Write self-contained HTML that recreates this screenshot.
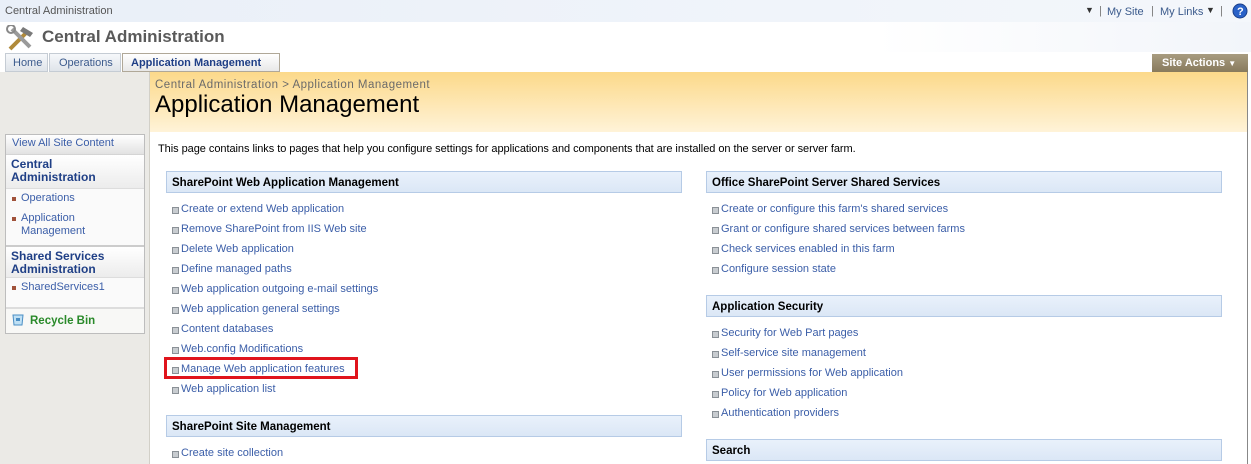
<!DOCTYPE html>
<html><head><meta charset="utf-8"><style>
*{margin:0;padding:0;box-sizing:border-box}
body{width:1251px;height:464px;overflow:hidden;font-family:"Liberation Sans",sans-serif;font-size:11px;background:#fff;position:relative}
.a{position:absolute;white-space:nowrap}
.top{left:0;top:0;width:1251px;height:22px;background:linear-gradient(90deg,#e9eff8,#f4f7fb);}
.lnk{color:#3b5a8c}
.hdr{position:absolute;height:22px;background:linear-gradient(#e9f1fb,#dbe7f6);border:1px solid #b6cbe6;font-weight:bold;font-size:11.5px;color:#000;padding:5px 0 0 5px}
.it{position:absolute;color:#3b5ea8;font-size:11px}
.it:before{content:"";position:absolute;left:-9px;top:4px;width:5px;height:5px;background:#c8ccd0;border:1px solid #8a9096}
.nav{position:absolute;left:5px;width:140px;}
.nh{color:#1f3f86;font-weight:bold;font-size:12px;line-height:13px;padding:3px 5px;background:linear-gradient(#fff,#ececec);border-top:1px solid #d4d4d4}
.ni{color:#3b5ea8;padding-left:15px;position:relative;font-size:11px}
.ni:before{content:"";position:absolute;left:6px;top:5px;width:4px;height:4px;background:#a0523a}
</style></head><body>
<div class="a top"></div>
<div class="a" style="left:5px;top:5px;color:#555">Central Administration</div>
<div class="a" style="left:1085px;top:5px;color:#333;font-size:9px">▼</div>
<div class="a" style="left:1099px;top:5px;color:#777">|</div>
<div class="a lnk" style="left:1107px;top:6px">My Site</div>
<div class="a" style="left:1151px;top:5px;color:#777">|</div>
<div class="a lnk" style="left:1160px;top:6px">My Links</div>
<div class="a" style="left:1206px;top:5px;color:#333;font-size:9px">▼</div>
<div class="a" style="left:1220px;top:5px;color:#777">|</div>
<svg class="a" style="left:1232px;top:3px" width="16" height="16"><circle cx="8" cy="8" r="7" fill="#2a62c8" stroke="#1a3f8a"/><text x="5" y="12" font-size="11" font-weight="bold" fill="#fff" font-family="Liberation Sans">?</text></svg>
<div class="a" style="left:0;top:22px;width:1251px;height:30px;background:linear-gradient(90deg,#fff 70%,#f2f5fa)"></div>
<svg class="a" style="left:6px;top:25px" width="30" height="26"><path d="M4 24 L22 6" stroke="#b08a3a" stroke-width="4"/><path d="M17 2 L27 8 L24 12 L14 6Z" fill="#7a7a7a"/><path d="M6 4 L24 22" stroke="#9a9a9a" stroke-width="4"/><circle cx="5" cy="4" r="4" fill="none" stroke="#888" stroke-width="2"/></svg>
<div class="a" style="left:42px;top:27px;font-size:17px;font-weight:bold;color:#5a5a5a">Central Administration</div>
<div class="a" style="left:5px;top:53px;width:43px;height:19px;background:linear-gradient(#f6f8fb,#dfe4ea);border:1px solid #c5ccd4;color:#3b5a8c;padding:3px 0 0 7px">Home</div>
<div class="a" style="left:49px;top:53px;width:72px;height:19px;background:linear-gradient(#f6f8fb,#dfe4ea);border:1px solid #c5ccd4;color:#3b5a8c;padding:3px 0 0 9px">Operations</div>
<div class="a" style="left:122px;top:53px;width:158px;height:19px;background:linear-gradient(#fff,#e8e8e8);border:1px solid #b0a898;color:#1f3f86;font-weight:bold;padding:3px 0 0 8px">Application Management</div>
<div class="a" style="left:1152px;top:54px;width:96px;height:18px;background:linear-gradient(#a89c80,#887a5c);color:#fff;font-weight:bold;padding:3px 0 0 10px">Site Actions <span style="font-size:8px">▼</span></div>
<div class="a" style="left:0;top:72px;width:150px;height:392px;background:#ebeae6;border-right:1px solid #d2d0c8"></div>
<div class="a" style="left:150px;top:72px;width:1097px;height:60px;background:linear-gradient(#fcd98a,#fff3d8);"></div>
<div class="a" style="left:1247px;top:72px;width:4px;height:392px;background:#fff;border-left:1px solid #888"></div>
<div class="a" style="left:155px;top:79px;color:#6a6a6a;font-size:11.5px;letter-spacing:0.5px">Central Administration &gt; Application Management</div>
<div class="a" style="left:155px;top:91px;color:#000;font-size:24px">Application Management</div>
<div class="a" style="left:158px;top:143px;color:#000;letter-spacing:-0.05px">This page contains links to pages that help you configure settings for applications and components that are installed on the server or server farm.</div>
<div class="nav" style="top:134px;height:200px;background:#f8f8f6;border:1px solid #bdbdbd">
<div style="color:#3b5ea8;padding:2px 6px;height:19px;background:linear-gradient(#fff,#e2e2e2)">View All Site Content</div>
<div class="nh" style="height:34px">Central<br>Administration</div>
<div style="padding:3px 0;background:#fafafa;border-top:1px solid #ddd"><div class="ni" style="height:20px">Operations</div><div class="ni" style="line-height:13px;height:30px">Application<br>Management</div></div>
<div class="nh" style="height:32px;border-top:2px solid #ccc">Shared Services<br>Administration</div>
<div style="padding:3px 0 0;height:30px;background:#fafafa;border-top:1px solid #ddd"><div class="ni">SharedServices1</div></div>
<div style="border-top:2px solid #ddd;height:26px;padding:4px 0 0 6px;color:#2a8a2a;font-weight:bold;font-size:11.5px"><svg width="12" height="13" style="vertical-align:-2px;margin-right:6px"><path d="M1 2 H11 L10 12 H2Z" fill="#bfe0f4" stroke="#4a8ec4"/><rect x="4" y="5" width="4" height="3" fill="#4a8ec4"/></svg>Recycle Bin</div>
</div>
<div class="hdr" style="left:166px;top:171px;width:516px">SharePoint Web Application Management</div>
<div class="it" style="left:181px;top:203px">Create or extend Web application</div>
<div class="it" style="left:181px;top:223px">Remove SharePoint from IIS Web site</div>
<div class="it" style="left:181px;top:243px">Delete Web application</div>
<div class="it" style="left:181px;top:263px">Define managed paths</div>
<div class="it" style="left:181px;top:283px">Web application outgoing e-mail settings</div>
<div class="it" style="left:181px;top:303px">Web application general settings</div>
<div class="it" style="left:181px;top:323px">Content databases</div>
<div class="it" style="left:181px;top:343px">Web.config Modifications</div>
<div class="it" style="left:181px;top:363px">Manage Web application features</div>
<div class="a" style="left:164px;top:357px;width:194px;height:22px;border:3px solid #e0141c"></div>
<div class="it" style="left:181px;top:383px">Web application list</div>
<div class="hdr" style="left:166px;top:415px;width:516px">SharePoint Site Management</div>
<div class="it" style="left:181px;top:447px">Create site collection</div>
<div class="hdr" style="left:706px;top:171px;width:516px">Office SharePoint Server Shared Services</div>
<div class="it" style="left:721px;top:203px">Create or configure this farm's shared services</div>
<div class="it" style="left:721px;top:223px">Grant or configure shared services between farms</div>
<div class="it" style="left:721px;top:243px">Check services enabled in this farm</div>
<div class="it" style="left:721px;top:263px">Configure session state</div>
<div class="hdr" style="left:706px;top:295px;width:516px">Application Security</div>
<div class="it" style="left:721px;top:327px">Security for Web Part pages</div>
<div class="it" style="left:721px;top:347px">Self-service site management</div>
<div class="it" style="left:721px;top:367px">User permissions for Web application</div>
<div class="it" style="left:721px;top:387px">Policy for Web application</div>
<div class="it" style="left:721px;top:407px">Authentication providers</div>
<div class="hdr" style="left:706px;top:439px;width:516px">Search</div>
</body></html>
